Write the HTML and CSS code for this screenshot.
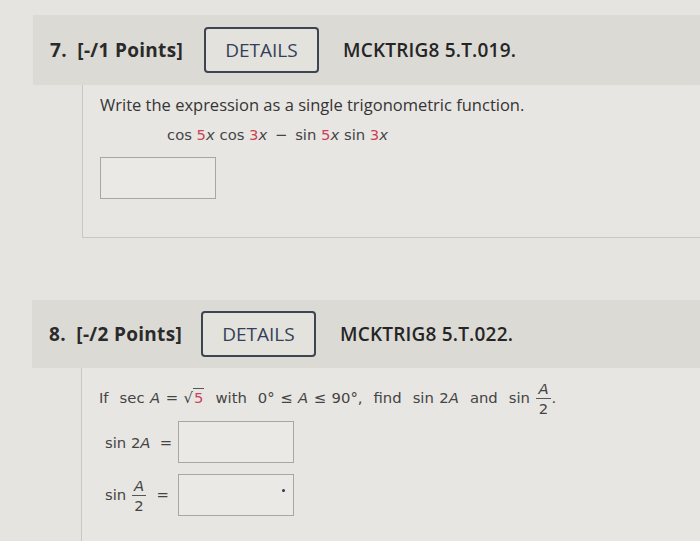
FILE: index.html
```html
<!DOCTYPE html>
<html>
<head>
<meta charset="utf-8">
<link rel="stylesheet" href="styles.css">
</head>
<body>
<div class="question q7">
  <div class="qhead">
    <span class="qnum">7.&nbsp; [-/1 Points]</span>
    <span class="details">DETAILS</span>
    <span class="code">MCKTRIG8 5.T.019.</span>
  </div>
  <div class="qbody body7">
    <p class="prompt">Write the expression as a single trigonometric function.</p>
    <div class="math expr">cos <span class="red">5</span><i>x</i> cos <span class="red">3</span><i>x</i> <span class="op">−</span> sin <span class="red">5</span><i>x</i> sin <span class="red">3</span><i>x</i></div>
    <div class="answer a1"></div>
  </div>
</div>

<div class="question q8">
  <div class="qhead">
    <span class="qnum">8.&nbsp; [-/2 Points]</span>
    <span class="details">DETAILS</span>
    <span class="code">MCKTRIG8 5.T.022.</span>
  </div>
  <div class="qbody body8">
    <div class="math stmt">If &nbsp;sec <i>A</i> = <span class="sqrt">√<span class="rad red">5</span></span> &nbsp;with &nbsp;0° ≤ <i>A</i> ≤ 90°, &nbsp;find &nbsp;sin 2<i>A</i> &nbsp;and &nbsp;sin <span class="frac"><span class="num"><i>A</i></span><span class="den">2</span></span>.</div>
    <div class="row r1">
      <span class="math label">sin 2<i>A</i> &nbsp;=</span>
      <div class="answer"></div>
    </div>
    <div class="row r2">
      <span class="math label">sin <span class="frac"><span class="num"><i>A</i></span><span class="den">2</span></span> &nbsp;=</span>
      <div class="answer with-dot"><span class="dot"></span></div>
    </div>
  </div>
</div>
</body>
</html>
```

FILE: styles.css
```css
html, body {
  margin: 0;
  padding: 0;
}
body {
  background: #e6e4e0;
  width: 700px;
  height: 541px;
  overflow: hidden;
  padding-top: 15px;
  box-sizing: border-box;
  font-family: "Open Sans", "Liberation Sans", sans-serif;
  color: #2e2e2e;
}
.question {
  margin-left: 33px;
}
.q8 {
  margin-top: 62px;
  margin-left: 32px;
}
.qhead {
  display: flex;
  align-items: center;
  height: 70px;
  padding-left: 17px;
  background: #dcdad5;
}
.q8 .qhead {
  height: 68px;
}
.qnum {
  font-size: 19px;
  font-weight: 700;
  color: #2a2a2a;
  letter-spacing: 0.3px;
}
.details {
  margin-left: 21px;
  width: 115px;
  height: 46px;
  box-sizing: border-box;
  border: 2px solid #3d4452;
  border-radius: 4px;
  display: flex;
  align-items: center;
  justify-content: center;
  font-size: 19px;
  color: #33405a;
  background: #e4e2dd;
}
.q8 .details {
  margin-left: 19px;
}
.code {
  margin-left: 24px;
  font-size: 19px;
  font-weight: 600;
  color: #252525;
  letter-spacing: 0.2px;
}
.qbody {
  margin-left: 49px;
  border-left: 1px solid #c9c7c2;
  background: #e8e6e2;
  box-sizing: border-box;
}
.body7 {
  height: 153px;
  border-bottom: 1px solid #c9c7c2;
  padding: 10px 0 0 17px;
}
.body8 {
  height: 200px;
  padding: 11px 0 0 17px;
}
.prompt {
  margin: 0;
  font-size: 16.5px;
  line-height: 19px;
  color: #353535;
}
.math {
  font-family: "DejaVu Sans", Verdana, sans-serif;
  font-size: 14.8px;
  color: #444;
}
.math i {
  font-style: italic;
}
.expr {
  margin: 11px 0 0 67px;
  line-height: 20px;
}
.op {
  margin: 0 3px;
}
.red {
  color: #cc4256;
}
.answer {
  width: 116px;
  height: 42px;
  box-sizing: border-box;
  border: 1px solid #a9a7a2;
  background: #ebe9e5;
}
.a1 {
  margin-top: 12px;
}
.stmt {
  line-height: 20px;
  word-spacing: 0.8px;
}
.sqrt {
  white-space: nowrap;
}
.rad {
  border-top: 1px solid #555;
  padding: 0 1px;
}
.frac {
  display: inline-flex;
  flex-direction: column;
  align-items: center;
  vertical-align: middle;
  line-height: 19px;
  margin: 0 1px;
}
.frac .num {
  border-bottom: 1px solid #555;
  padding: 0 2px;
}
.frac .den {
  padding: 0 2px;
}
.row {
  display: flex;
  align-items: center;
  margin-left: 6px;
}
.r1 {
  margin-top: 3px;
}
.r2 {
  margin-top: 11px;
}
.label {
  width: 73px;
  flex: none;
}
.row .answer {
  width: 116px;
  height: 42px;
}
.with-dot {
  position: relative;
}
.dot {
  position: absolute;
  right: 8px;
  top: 14px;
  width: 3px;
  height: 3px;
  border-radius: 50%;
  background: #2b3550;
}
```
